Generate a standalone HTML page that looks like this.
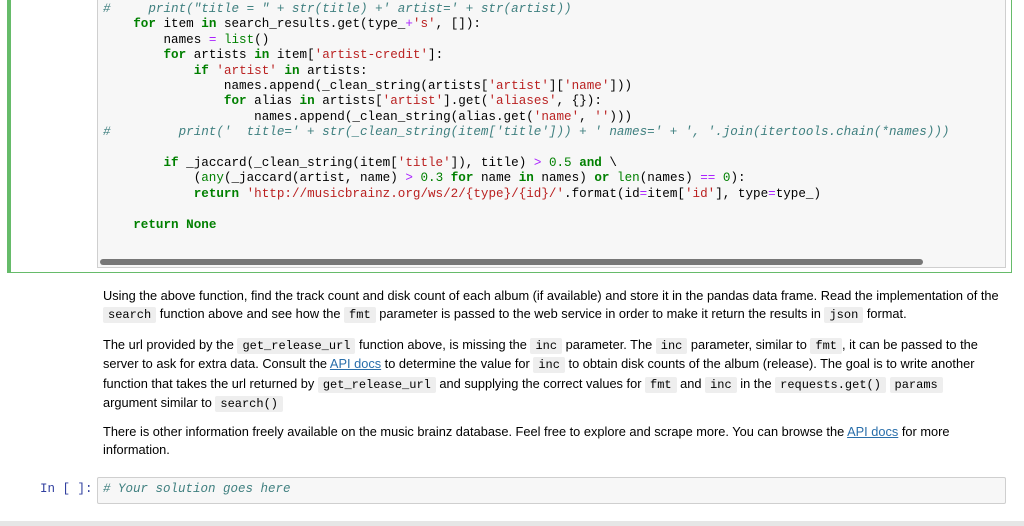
<!DOCTYPE html>
<html><head><style>
body{margin:0;width:1024px;height:526px;background:#fff;position:relative;overflow:hidden;font-family:"Liberation Sans",sans-serif;}
.cell{position:absolute;left:7px;top:-2px;width:1005px;height:275px;border:1px solid #66bb6a;border-left:4px solid #66bb6a;box-sizing:border-box;}
.code{position:absolute;left:97px;top:-2px;width:909px;height:270px;background:#f7f7f7;border:1px solid #cfcfcf;box-sizing:border-box;}
pre{margin:0;position:absolute;left:103px;top:2px;font-family:"Liberation Mono",monospace;font-size:12.6px;line-height:15.4px;color:#000;}
.k{color:#008000;font-weight:bold}.s{color:#BA2121}.c{color:#408080;font-style:italic}.o{color:#AA22FF}.n{color:#008000}.b{color:#008000}
.sb{position:absolute;left:100px;top:259px;width:823px;height:6px;background:#777;border-radius:3px;}
.p{position:absolute;left:103px;width:905px;font-size:12.8px;line-height:18.3px;color:#000;}
code{font-family:"Liberation Mono",monospace;font-size:12px;background:#eee;padding:1px 5px;border-radius:2px;}
a{color:#296eaa;text-decoration:underline}
.in{position:absolute;left:40px;top:482px;font-family:"Liberation Mono",monospace;font-size:12.5px;color:#303F9F;}
.ib{position:absolute;left:97px;top:477px;width:909px;height:27px;background:#f7f7f7;border:1px solid #cfcfcf;box-sizing:border-box;border-radius:2px;}
.ic{position:absolute;left:103px;top:482px;font-family:"Liberation Mono",monospace;font-size:12.5px;color:#408080;font-style:italic;}
.bot{position:absolute;left:0;top:521px;width:1024px;height:5px;background:#e6e6e6;}
</style></head><body>
<div class="cell"></div>
<div class="code"></div>
<pre><span class="c">#     print("title = " + str(title) +' artist=' + str(artist))</span>
    <span class="k">for</span> item <span class="k">in</span> search_results.get(type_<span class="o">+</span><span class="s">'s'</span>, []):
        names <span class="o">=</span> <span class="b">list</span>()
        <span class="k">for</span> artists <span class="k">in</span> item[<span class="s">'artist-credit'</span>]:
            <span class="k">if</span> <span class="s">'artist'</span> <span class="k">in</span> artists:
                names.append(_clean_string(artists[<span class="s">'artist'</span>][<span class="s">'name'</span>]))
                <span class="k">for</span> alias <span class="k">in</span> artists[<span class="s">'artist'</span>].get(<span class="s">'aliases'</span>, {}):
                    names.append(_clean_string(alias.get(<span class="s">'name'</span>, <span class="s">''</span>)))
<span class="c">#         print('  title=' + str(_clean_string(item['title'])) + ' names=' + ', '.join(itertools.chain(*names)))</span>

        <span class="k">if</span> _jaccard(_clean_string(item[<span class="s">'title'</span>]), title) <span class="o">&gt;</span> <span class="n">0.5</span> <span class="k">and</span> \
            (<span class="b">any</span>(_jaccard(artist, name) <span class="o">&gt;</span> <span class="n">0.3</span> <span class="k">for</span> name <span class="k">in</span> names) <span class="k">or</span> <span class="b">len</span>(names) <span class="o">==</span> <span class="n">0</span>):
            <span class="k">return</span> <span class="s">'http://musicbrainz.org/ws/2/{type}/{id}/'</span>.format(id<span class="o">=</span>item[<span class="s">'id'</span>], type<span class="o">=</span>type_)

    <span class="k">return</span> <span class="k">None</span></pre>
<div class="sb"></div>
<div class="p" style="top:287px">Using the above function, find the track count and disk count of each album (if available) and store it in the pandas data frame. Read the implementation of the <code>search</code> function above and see how the <code>fmt</code> parameter is passed to the web service in order to make it return the results in <code>json</code> format.</div>
<div class="p" style="top:336px;width:880px">The url provided by the <code>get_release_url</code> function above, is missing the <code>inc</code> parameter. The <code>inc</code> parameter, similar to <code>fmt</code>, it can be passed to the server to ask for extra data. Consult the <a>API docs</a> to determine the value for <code>inc</code> to obtain disk counts of the album (release). The goal is to write another function that takes the url returned by <code>get_release_url</code> and supplying the correct values for <code>fmt</code> and <code>inc</code> in the <code>requests.get()</code> <code>params</code> argument similar to <code>search()</code></div>
<div class="p" style="top:423px">There is other information freely available on the music brainz database. Feel free to explore and scrape more. You can browse the <a>API docs</a> for more information.</div>
<div class="in">In [ ]:</div>
<div class="ib"></div>
<div class="ic"># Your solution goes here</div>
<div class="bot"></div>
</body></html>
